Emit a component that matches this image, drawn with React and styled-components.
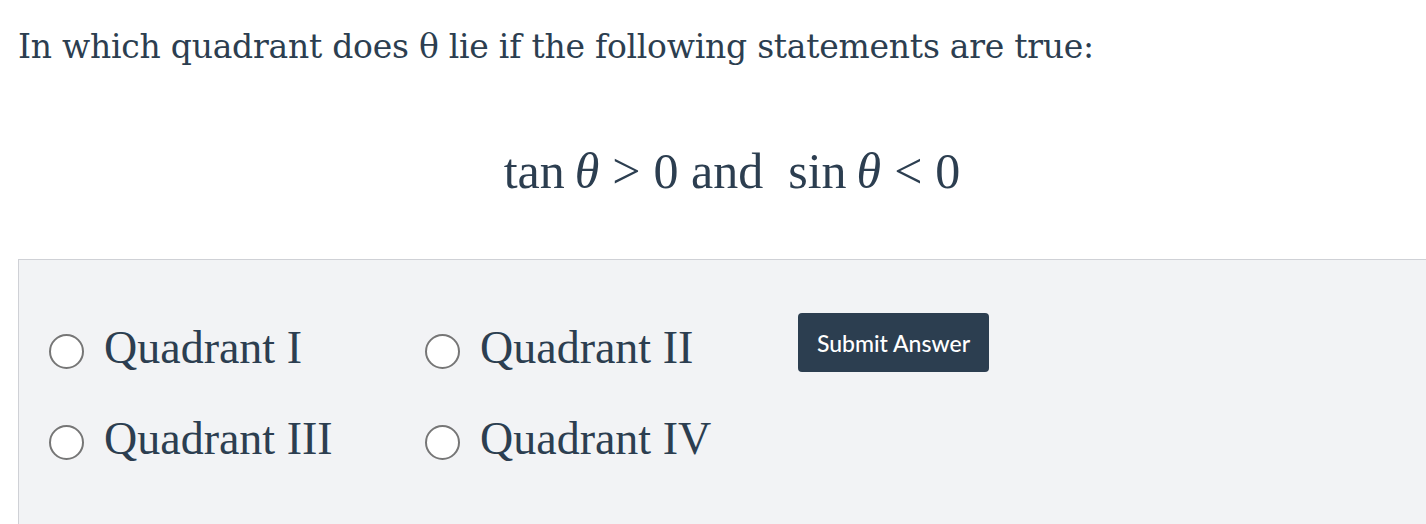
import React from "react";
import styled, { createGlobalStyle } from "styled-components";

const Global = createGlobalStyle`
  html, body { margin: 0; padding: 0; background: #fff; overflow: hidden; }
  body { color: #2c3e50; }
`;

const Page = styled.div`
  width: 1428px;
  padding: 0 0 0 18px;
  box-sizing: content-box;
`;

const Question = styled.h1`
  margin: 0;
  padding-top: 23px;
  font-family: "DejaVu Serif", Georgia, serif;
  font-weight: normal;
  font-size: 33px;
  line-height: 48px;
  letter-spacing: -0.25px;
  color: #2c3e50;
`;

const MathLine = styled.div`
  margin-top: 73px;
  text-align: center;
  font-family: "Liberation Serif", "Times New Roman", serif;
  font-size: 50px;
  line-height: 54px;
  color: #2c3e50;
`;

const Var = styled.i`
  font-style: italic;
  margin: 0 ${(p) => p.$r || 0}px 0 ${(p) => p.$l || 0}px;
`;

const Rel = styled.span`
  margin: 0 13px;
`;

const Panel = styled.div`
  margin-top: 61px;
  width: 1428px;
  height: 280px;
  background: #f2f3f5;
  border-top: 1px solid #cfd1d6;
  border-left: 1px solid #cfd1d6;
  box-sizing: border-box;
  padding: 52px 0 0 30px;
  display: flex;
  align-items: flex-start;
`;

const Options = styled.div`
  display: grid;
  grid-template-columns: 376px 373px;
  grid-auto-rows: 91px;
`;

const Option = styled.label`
  display: flex;
  align-items: center;
  height: 70px;
  gap: 20px;
  cursor: pointer;
`;

const Radio = styled.span`
  width: 35px;
  height: 35px;
  border-radius: 50%;
  border: 2px solid #767676;
  background: #fff;
  box-sizing: border-box;
  flex: none;
  margin-top: 9px;
`;

const OptionText = styled.span`
  font-family: "Liberation Serif", "Times New Roman", serif;
  font-size: 46px;
  color: #2c3e50;
`;

const SubmitButton = styled.button`
  margin-top: 1px;
  width: 191px;
  height: 59px;
  background: #2c3e50;
  color: #fff;
  border: none;
  border-radius: 4px;
  font-family: Lato, "Open Sans", sans-serif;
  font-size: 23px;
  font-weight: 500;
  padding: 0;
  cursor: pointer;
`;

const options = ["Quadrant I", "Quadrant II", "Quadrant III", "Quadrant IV"];

export default function App() {
  return (
    <Page>
      <Global />
      <Question>In which quadrant does θ lie if the following statements are true:</Question>
      <MathLine>
        tan<Var $l={10}>θ</Var>
        <Rel>&gt;</Rel>0 and&nbsp;&nbsp;sin<Var $l={10}>θ</Var>
        <Rel>&lt;</Rel>0
      </MathLine>
      <Panel>
        <Options>
          {options.map((o) => (
            <Option key={o}>
              <Radio />
              <OptionText>{o}</OptionText>
            </Option>
          ))}
        </Options>
        <SubmitButton>Submit Answer</SubmitButton>
      </Panel>
    </Page>
  );
}
